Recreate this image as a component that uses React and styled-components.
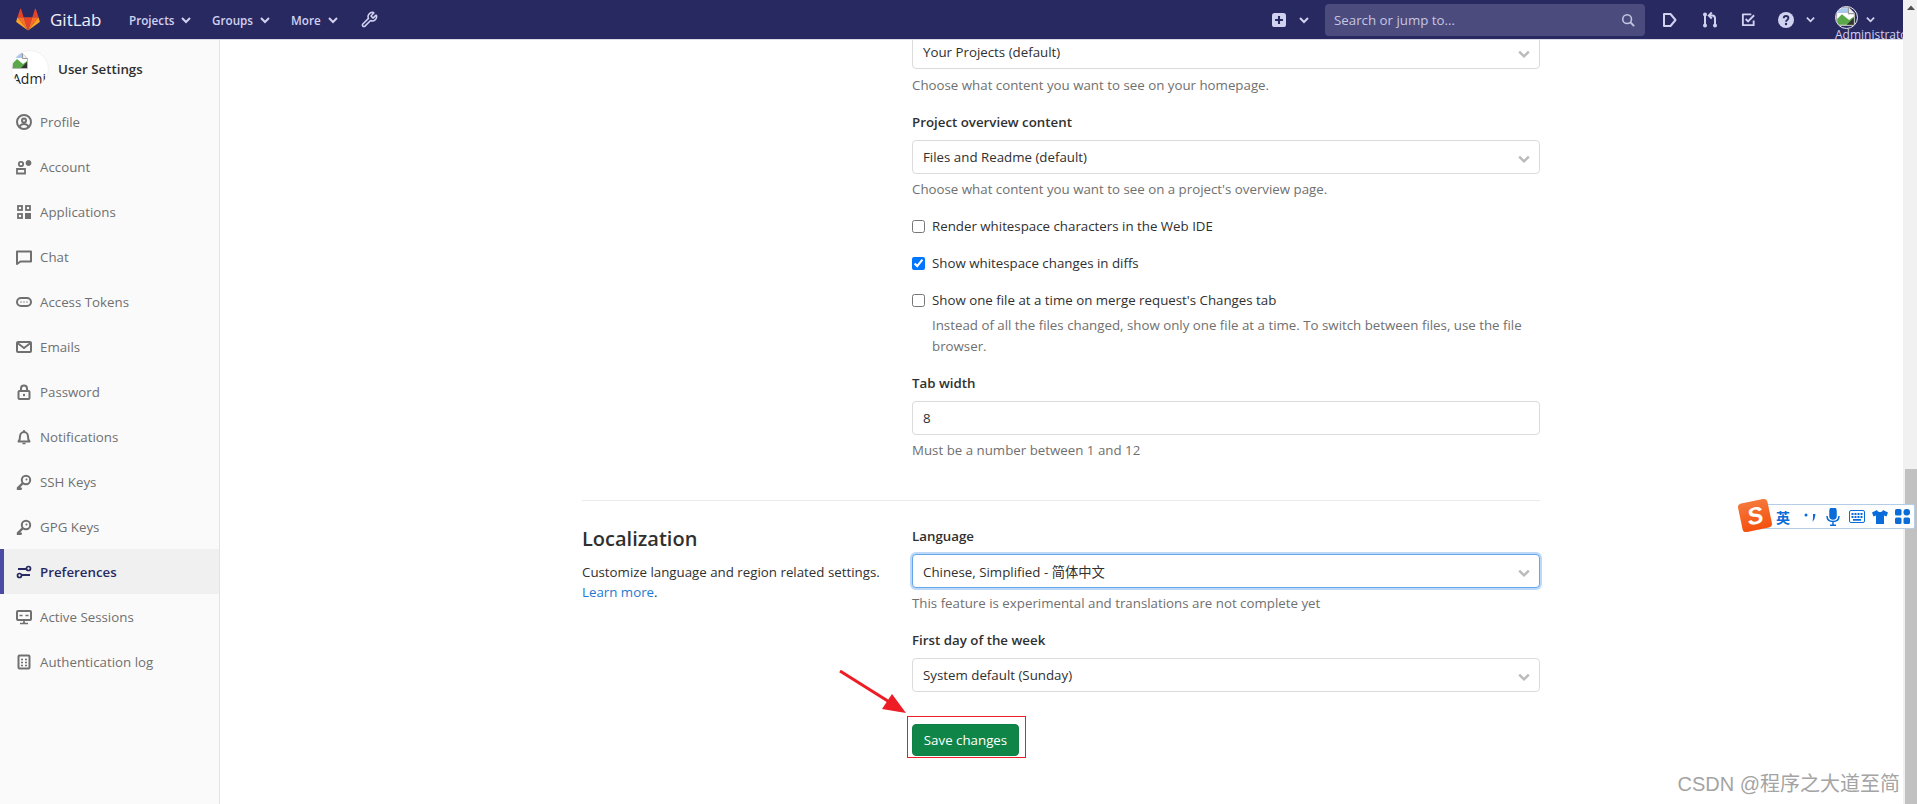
import React from 'react';
import styled, {createGlobalStyle} from 'styled-components';
import {Wrench} from 'lucide-react';

const FONT = `"Open Sans", "Noto Sans CJK SC", sans-serif`;

const GlobalStyle = createGlobalStyle`
  html, body { margin: 0; height: 100%; overflow: hidden; background: #fff; }
  #root { height: 100%; }
  * { box-sizing: border-box; }
  body { font-family: ${FONT}; font-size: 13.3px; color: #303030; }
`;

const Screen = styled.div`
  position: relative;
  display: flex;
  height: 804px;
  overflow: hidden;
`;
const Page = styled.div`
  flex: 1;
  min-width: 0;
  display: flex;
  flex-direction: column;
`;

/* ---- navbar ---- */
const Navbar = styled.header`
  position: relative;
  z-index: 2;
  flex: none;
  display: flex;
  align-items: center;
  height: 40px;
  background: #292961;
  border-bottom: 1px solid #dcdce8;
  color: #d1d1f0;
  overflow: hidden;
`;
const Brand = styled.div`
  display: flex;
  align-items: center;
  gap: 10px;
  margin-left: 16px;
  width: 113px;
  font-size: 17px;
  color: #f0f0f8;
`;
const NavLink = styled.div`
  display: flex;
  align-items: center;
  gap: 7px;
  width: ${p => p.$w}px;
  font-weight: 600;
  font-size: 11.7px;
`;
const NavRight = styled.div`
  margin-left: auto;
  display: flex;
  align-items: center;
`;
const IconSlot = styled.div`
  display: flex;
  align-items: center;
  width: ${p => p.$w}px;
`;
const Search = styled.div`
  display: flex;
  align-items: center;
  justify-content: space-between;
  width: 320px;
  height: 32px;
  margin-right: 17px;
  padding: 0 10px 0 9px;
  background: #4c4b7e;
  border-radius: 4px;
  font-size: 13.3px;
  color: #c6c6e0;
`;
const NavAvatar = styled.div`
  display: flex;
  flex-direction: column;
  width: 34px;
  margin-top: 7px;
  font-size: 12px;
  line-height: 11px;
  white-space: nowrap;
`;
const AvatarRing = styled.div`
  width: 23px;
  height: 23px;
  border: 1px solid #e8e8f2;
  border-radius: 50%;
  overflow: hidden;
`;

/* ---- sidebar ---- */
const Body = styled.div`
  flex: 1;
  min-height: 0;
  display: flex;
`;
const Sidebar = styled.aside`
  flex: none;
  width: 220px;
  background: #fafafa;
  border-right: 1px solid #e3e3e3;
`;
const SideHead = styled.div`
  display: flex;
  align-items: center;
  gap: 9px;
  padding: 10px 0 0 11px;
  margin-bottom: 11px;
  font-weight: 600;
  font-size: 13.3px;
  color: #303030;
`;
const SideAvatar = styled.div`
  width: 38px;
  height: 38px;
  padding: 2px 0 0 0;
  background: #fff;
  border: 1px solid #f2f2f2;
  border-radius: 50%;
  overflow: hidden;
  font-size: 14px;
  line-height: 20px;
  color: #222;
  white-space: nowrap;
  font-weight: 400;
`;
const SideItem = styled.div`
  display: flex;
  align-items: center;
  gap: 8px;
  height: 45px;
  padding-left: ${p => (p.$active ? 12 : 16)}px;
  background: ${p => (p.$active ? '#f0f0f0' : 'transparent')};
  border-left: ${p => (p.$active ? '4px solid #4b4ba3' : 'none')};
  color: ${p => (p.$active ? '#292961' : '#707070')};
  font-weight: ${p => (p.$active ? 600 : 400)};
`;

/* ---- settings form ---- */
const Main = styled.main`
  flex: 1;
  min-width: 0;
  margin-top: -5px;
`;
const Content = styled.div`
  width: 958px;
  margin-left: 362px;
`;
const Section = styled.section`
  display: grid;
  grid-template-columns: 330px 628px;
`;
const FormCol = styled.div`
  grid-column: 2;
`;
const Field = styled.div`
  margin-bottom: ${p => p.$mb ?? 18}px;
`;
const Label = styled.label`
  display: block;
  height: 20px;
  margin-bottom: ${p => p.$mb ?? 8}px;
  line-height: 20px;
  font-weight: 600;
  color: #303030;
`;
const SelectBox = styled.div`
  display: flex;
  align-items: center;
  justify-content: space-between;
  height: 34px;
  padding: 0 9px 0 10px;
  background: #fff;
  border: 1px solid ${p => (p.$focus ? '#63a6e9' : '#dbdbdb')};
  border-radius: 4px;
  box-shadow: ${p => (p.$focus ? '0 0 0 2px #bdd9f7' : 'none')};
  color: #303030;
`;
const SelectCaret = styled.span`
  display: flex;
  margin-top: 4px;
`;
const TextInput = styled.input`
  display: block;
  width: 100%;
  height: 34px;
  padding: 0 10px;
  border: 1px solid #dbdbdb;
  border-radius: 4px;
  font: inherit;
  color: #303030;
`;
const Help = styled.p`
  margin: ${p => p.$mt ?? 5}px 0 0;
  line-height: 20px;
  color: #707070;
`;
const CheckRow = styled.label`
  display: flex;
  align-items: center;
  gap: 7px;
  height: 20px;
  margin-bottom: 17px;
`;
const Check = styled.input`
  width: 13px;
  height: 13px;
  margin: 0;
`;
const CheckHelp = styled.p`
  margin: -12px 0 16px 20px;
  line-height: 21px;
  color: #707070;
`;
const Divider = styled.hr`
  height: 1px;
  margin: 40px 0 25px;
  border: 0;
  background: #eaeaea;
`;
const SectionIntro = styled.div`
  padding-top: 1px;
`;
const SectionTitle = styled.h4`
  margin: 0 0 11px;
  height: 24px;
  line-height: 24px;
  font-size: 20px;
  font-weight: 600;
  color: #303030;
`;
const SectionText = styled.p`
  margin: 0;
  line-height: 20px;
  color: #303030;
`;
const LearnMore = styled.span`
  color: #1f78d1;
`;
const SaveRow = styled.div`
  position: relative;
  width: 107px;
  margin-top: 32px;
`;
const SaveButton = styled.button`
  display: block;
  width: 100%;
  height: 32px;
  padding: 0;
  border: 1px solid #0e7f46;
  border-radius: 4px;
  background: #108548;
  color: #fff;
  font: inherit;
  font-weight: 500;
`;
const RedBox = styled.div`
  position: absolute;
  left: -5px;
  top: -8px;
  width: 119px;
  height: 42px;
  border: 1px solid #ee1c25;
`;
const RedArrow = styled.svg`
  position: absolute;
  left: -73px;
  top: -54px;
`;

/* ---- things on top of the page ---- */
const Scrollbar = styled.div`
  position: relative;
  flex: none;
  display: flex;
  flex-direction: column;
  width: 14px;
  background: #f1f1f1;
`;
const ScrollUp = styled.div`
  height: 469px;
  padding: 5px 0 0 4px;
  line-height: 0;
`;
const ScrollThumb = styled.div`
  flex: 1;
  margin-left: 2px;
  background: #c1c1c1;
`;
const ImeBar = styled.div`
  position: absolute;
  z-index: 3;
  left: 1750px;
  top: 504px;
  width: 165px;
  height: 25px;
  display: flex;
  align-items: center;
  padding-left: 25px;
  gap: 0;
  background: #fff;
  border: 1px solid #b6cde6;
  border-radius: 2px;
  color: #0a6cd8;
`;
const ImeLogo = styled.div`
  position: absolute;
  left: -11px;
  top: -4px;
  width: 30px;
  height: 29px;
  display: flex;
  align-items: center;
  justify-content: center;
  background: linear-gradient(#f4783a, #f5500f);
  border-radius: 4px;
  transform: rotate(-12deg);
  color: #fff;
  font: italic 700 24px "Liberation Sans", sans-serif;
`;
const ImeChar = styled.span`
  width: 27px;
  font: 700 14px "Noto Sans CJK SC", sans-serif;
`;
const ImeSlot = styled.div`
  display: flex;
  justify-content: center;
  width: ${p => p.$w ?? 24.5}px;
`;
const Watermark = styled.div`
  position: absolute;
  z-index: 3;
  right: 17px;
  top: 773px;
  font: 20px "Liberation Sans", "Noto Sans CJK SC", sans-serif;
  line-height: 22px;
  color: #a4a4a4;
`;

const Svg = ({size = 16, children, ...rest}) => (
    <svg width={size} height={size} viewBox="0 0 16 16" fill="none" stroke="currentColor"
         strokeWidth="2" style={{flex: 'none'}} {...rest}>{children}</svg>
);

const Chevron = ({color = 'currentColor', size = 10}) => (
    <svg width={size} height={size} viewBox="0 0 10 10" fill="none" stroke={color} strokeWidth="2" style={{flex: 'none'}}>
        <path d="M1 3l4 4 4-4"/>
    </svg>
);

const SIDE_ICONS = {
    profile: <>
        <circle cx="8" cy="8" r="7"/>
        <circle cx="8" cy="6.5" r="2"/>
        <path d="M3.5 13c.8-2 2.5-3 4.5-3s3.700 1 4.500 3"/>
    </>,
    account: <>
        <circle cx="5" cy="5" r="2.200" strokeWidth="1.800"/>
        <path d="M1 14.500V10h8v4.500z" strokeWidth="1.800"/>
        <circle cx="12.500" cy="4" r="2.500" fill="currentColor" strokeWidth="1"/>
    </>,
    apps: <>
        <rect x="2" y="2" width="4" height="4" strokeWidth="1.800"/>
        <rect x="10" y="2" width="4" height="4" strokeWidth="1.800"/>
        <rect x="2" y="10" width="4" height="4" strokeWidth="1.800"/>
        <rect x="9" y="9" width="6" height="6" fill="currentColor" stroke="none"/>
    </>,
    chat: <path d="M1 2.500h14v10H4.500L1 15z" strokeLinejoin="round"/>,
    token: <>
        <rect x="1" y="4" width="14" height="8" rx="4"/>
        <path d="M4.500 8h1M7.500 8h1M10.500 8h1" strokeWidth="1.600"/>
    </>,
    mail: <>
        <rect x="1" y="3" width="14" height="10" rx="1"/>
        <path d="M1.500 4l6.500 5 6.500-5" strokeWidth="1.800"/>
    </>,
    lock: <>
        <rect x="2.500" y="7" width="11" height="8" rx="1"/>
        <path d="M5 7V4.500a3 3 0 016 0V7"/>
        <circle cx="8" cy="11" r="1.200" fill="currentColor" stroke="none"/>
    </>,
    bell: <>
        <path d="M2.500 12.500h11c-1.500-1.500-1.500-3-1.500-5 0-2.500-1.800-4.500-4-4.500S4 5 4 7.500c0 2 0 3.500-1.500 5z" strokeLinejoin="round"/>
        <path d="M6.500 14.500h3" strokeWidth="1.600"/>
        <path d="M8 1v2" strokeWidth="1.600"/>
    </>,
    key: <>
        <circle cx="10" cy="6" r="4.200"/>
        <path d="M7 9l-5 5v1h2.500l.5-1.500" strokeWidth="2.400"/>
        <circle cx="10.500" cy="5.500" r="1" fill="currentColor" stroke="none"/>
    </>,
    prefs: <>
        <path d="M2 5h8M6 11h8"/>
        <circle cx="12.500" cy="4.500" r="2" strokeWidth="1.700"/>
        <circle cx="3.500" cy="11.500" r="2" strokeWidth="1.700"/>
    </>,
    monitor: <>
        <rect x="1" y="2" width="14" height="9" rx="1"/>
        <path d="M3.500 6.500h3M9.500 6.500h3M8 11v3M4 14.500h8" strokeWidth="1.700"/>
    </>,
    log: <>
        <rect x="2.500" y="1.500" width="11" height="13" rx="1"/>
        <path d="M5 5.500h2M9 5.500h2M5 8.500h2M9 8.500h2M5 11.500h2M9 11.500h2" strokeWidth="1.500"/>
    </>,
};

const SIDE_ITEMS = [
    ['profile', 'Profile'],
    ['account', 'Account'],
    ['apps', 'Applications'],
    ['chat', 'Chat'],
    ['token', 'Access Tokens'],
    ['mail', 'Emails'],
    ['lock', 'Password'],
    ['bell', 'Notifications'],
    ['key', 'SSH Keys'],
    ['key', 'GPG Keys'],
    ['prefs', 'Preferences'],
    ['monitor', 'Active Sessions'],
    ['log', 'Authentication log'],
];

const Tanuki = () => (
    <svg width="24" height="23" viewBox="0 0 36 35" style={{flex: 'none'}}>
        <path d="M18 34.400L11.400 14h13.200z" fill="#e24329"/>
        <path d="M18 34.400L11.400 14H2z" fill="#fc6d26"/>
        <path d="M2 14L.1 20.200c-.2.500 0 1.100.5 1.500L18 34.400z" fill="#fca326"/>
        <path d="M2 14h9.400L7.400 1.700c-.2-.600-1.200-.600-1.400 0z" fill="#e24329"/>
        <path d="M18 34.400L24.600 14H34z" fill="#fc6d26"/>
        <path d="M34 14l1.900 6.200c.2.500 0 1.100-.5 1.500L18 34.400z" fill="#fca326"/>
        <path d="M34 14h-9.400l4-12.300c.2-.600 1.200-.600 1.400 0z" fill="#e24329"/>
    </svg>
);

const BrokenImage = ({size = 16}) => (
    <svg width={size} height={size} viewBox="0 0 16 16" style={{display: 'block', flex: 'none'}}>
        <path d="M.5.5h10l5 5v10H.5z" fill="#fff" stroke="#b8b8b8"/>
        <path d="M1 1h10v4H1z" fill="#a9c8ee"/>
        <path d="M1 15V10l4-4 6 5 4-3v7z" fill="#5aa84a"/>
        <path d="M9 15l6-6v6z" fill="#333"/>
        <path d="M10.500.5v5h5" fill="#eee" stroke="#999"/>
    </svg>
);

const Select = ({value, focus}) => (
    <SelectBox $focus={focus}>
        <span>{value}</span>
        <SelectCaret><Chevron color="#bababa" size={12}/></SelectCaret>
    </SelectBox>
);

export default function App() {
    return (
        <Screen>
            <GlobalStyle/>
            <Page>
                <Navbar>
                    <Brand><Tanuki/>GitLab</Brand>
                    <NavLink $w={83}>Projects <Chevron/></NavLink>
                    <NavLink $w={79}>Groups <Chevron/></NavLink>
                    <NavLink $w={70}>More <Chevron/></NavLink>
                    <Wrench size={17} strokeWidth={2.2}/>
                    <NavRight>
                        <IconSlot $w={27}>
                            <Svg size={14}>
                                <rect x="0" y="0" width="16" height="16" rx="3" fill="currentColor" stroke="none"/>
                                <path d="M8 3.500v9M3.500 8h9" stroke="#292961" strokeWidth="2.400"/>
                            </Svg>
                        </IconSlot>
                        <IconSlot $w={26}><Chevron/></IconSlot>
                        <Search>
                            Search or jump to...
                            <Svg size={14} strokeWidth="1.800">
                                <circle cx="7" cy="7" r="5"/>
                                <path d="M10.500 10.500L15 15" strokeWidth="2.200"/>
                            </Svg>
                        </Search>
                        <IconSlot $w={40}>
                            <Svg size={16}>
                                <path d="M2 2h6.500l5 6-5 6H2z" strokeLinejoin="round"/>
                            </Svg>
                        </IconSlot>
                        <IconSlot $w={39}>
                            <Svg size={16}>
                                <path d="M3 3v10" strokeWidth="2"/>
                                <circle cx="3" cy="2.500" r="2" fill="currentColor" stroke="none"/>
                                <circle cx="3" cy="13.500" r="2" fill="currentColor" stroke="none"/>
                                <circle cx="13" cy="13.500" r="2" fill="currentColor" stroke="none"/>
                                <path d="M13 13V6.500c0-1.800-1-3-2.800-3H7.500" strokeWidth="2"/>
                                <path d="M9.800 .5l-3 3 3 3" strokeWidth="2"/>
                            </Svg>
                        </IconSlot>
                        <IconSlot $w={37}>
                            <Svg size={15}>
                                <path d="M13.500 9v5H2V2.500h9" strokeLinejoin="round"/>
                                <path d="M5 7.500l2.500 2.500L14 3.500" strokeWidth="2"/>
                            </Svg>
                        </IconSlot>
                        <IconSlot $w={28}>
                            <Svg size={16}>
                                <circle cx="8" cy="8" r="8" fill="currentColor" stroke="none"/>
                                <path d="M5.700 6.200C5.800 4.800 6.800 4 8 4s2.400.8 2.400 2.100c0 1.800-2.400 1.800-2.400 3.600" stroke="#292961" strokeWidth="1.900"/>
                                <circle cx="8" cy="12" r="1.200" fill="#292961" stroke="none"/>
                            </Svg>
                        </IconSlot>
                        <IconSlot $w={29}><Chevron size={9}/></IconSlot>
                        <IconSlot $w={31}>
                            <NavAvatar>
                                <AvatarRing><BrokenImage size={19}/></AvatarRing>
                                Administrator
                            </NavAvatar>
                        </IconSlot>
                        <IconSlot $w={37}><Chevron size={9}/></IconSlot>
                    </NavRight>
                </Navbar>
                <Body>
                    <Sidebar>
                        <SideHead>
                            <SideAvatar><BrokenImage/>Admin</SideAvatar>
                            User Settings
                        </SideHead>
                        {SIDE_ITEMS.map(([icon, label]) => (
                            <SideItem key={label} $active={label === 'Preferences'}>
                                <Svg>{SIDE_ICONS[icon]}</Svg>
                                {label}
                            </SideItem>
                        ))}
                    </Sidebar>
                    <Main>
                        <Content>
                            <Section>
                                <FormCol>
                                    <Field $mb={17}>
                                        <Select value="Your Projects (default)"/>
                                        <Help $mt={6}>Choose what content you want to see on your homepage.</Help>
                                    </Field>
                                    <Field $mb={17}>
                                        <Label>Project overview content</Label>
                                        <Select value="Files and Readme (default)"/>
                                        <Help>Choose what content you want to see on a project's overview page.</Help>
                                    </Field>
                                    <CheckRow><Check type="checkbox" readOnly/>Render whitespace characters in the Web IDE</CheckRow>
                                    <CheckRow><Check type="checkbox" checked readOnly/>Show whitespace changes in diffs</CheckRow>
                                    <CheckRow><Check type="checkbox" readOnly/>Show one file at a time on merge request's Changes tab</CheckRow>
                                    <CheckHelp>Instead of all the files changed, show only one file at a time. To switch between files, use the file browser.</CheckHelp>
                                    <Label>Tab width</Label>
                                    <TextInput type="text" defaultValue="8"/>
                                    <Help>Must be a number between 1 and 12</Help>
                                </FormCol>
                            </Section>
                            <Divider/>
                            <Section>
                                <SectionIntro>
                                    <SectionTitle>Localization</SectionTitle>
                                    <SectionText>Customize language and region related settings.<br/>
                                        <LearnMore>Learn more</LearnMore>.
                                    </SectionText>
                                </SectionIntro>
                                <div>
                                    <Field $mb={17}>
                                        <Label>Language</Label>
                                        <Select value="Chinese, Simplified - 简体中文" focus/>
                                        <Help>This feature is experimental and translations are not complete yet</Help>
                                    </Field>
                                    <Field $mb={0}>
                                        <Label>First day of the week</Label>
                                        <Select value="System default (Sunday)"/>
                                    </Field>
                                    <SaveRow>
                                        <SaveButton>Save changes</SaveButton>
                                        <RedBox/>
                                        <RedArrow width="68" height="44" viewBox="0 0 68 44">
                                            <path d="M1 1L52 33" stroke="#ee1c25" strokeWidth="3"/>
                                            <path d="M67 43L43 39l10-15z" fill="#ee1c25"/>
                                        </RedArrow>
                                    </SaveRow>
                                </div>
                            </Section>
                        </Content>
                    </Main>
                </Body>
            </Page>
            <Scrollbar>
                <ScrollUp>
                    <svg width="8" height="6" viewBox="0 0 8 6" style={{display: 'block'}}><path d="M0 5l4-4.500L8 5z" fill="#505050"/></svg>
                </ScrollUp>
                <ScrollThumb/>
            </Scrollbar>
            <ImeBar>
                <ImeLogo>S</ImeLogo>
                <ImeChar>英</ImeChar>
                <ImeSlot $w={20}>
                    <svg width="12" height="12" viewBox="0 0 12 12" fill="currentColor">
                        <circle cx="2" cy="4" r="1.500"/>
                        <path d="M9 3h2.500l-1 5-2 3 .5-4z"/>
                    </svg>
                </ImeSlot>
                <ImeSlot $w={28}>
                    <svg width="14" height="18" viewBox="0 0 14 18" fill="none" stroke="currentColor" strokeWidth="1.500">
                        <rect x="4" y="0" width="6" height="11" rx="3" fill="currentColor"/>
                        <path d="M1 8c0 3.500 2.500 5.500 6 5.500s6-2 6-5.500M7 13.500V17M4 17.300h6"/>
                    </svg>
                </ImeSlot>
                <ImeSlot>
                    <svg width="16" height="13" viewBox="0 0 16 13">
                        <rect x=".5" y=".5" width="15" height="12" rx="1.500" fill="none" stroke="currentColor"/>
                        <path d="M2.500 3h2v2h-2zM5.500 3h2v2h-2zM8.500 3h2v2h-2zM11.500 3h2v2h-2zM2.500 6h2v2h-2zM5.500 6h2v2h-2zM8.500 6h2v2h-2zM11.500 6h2v2h-2zM4 9h8v1.800H4z" fill="currentColor"/>
                    </svg>
                </ImeSlot>
                <ImeSlot>
                    <svg width="16" height="14" viewBox="0 0 16 14" fill="currentColor">
                        <path d="M5 0L0 2.500l1.500 4L4 5.500V14h8V5.500l2.500 1 1.500-4L11 0c-.5 1.500-1.500 2-3 2S5.500 1.500 5 0z"/>
                    </svg>
                </ImeSlot>
                <ImeSlot>
                    <svg width="15" height="15" viewBox="0 0 15 15" fill="currentColor">
                        <rect x="0" y="0" width="6.500" height="6.500" rx="1.500"/>
                        <rect x="8.500" y="0" width="6.500" height="6.500" rx="3"/>
                        <rect x="0" y="8.500" width="6.500" height="6.500" rx="1.500"/>
                        <rect x="8.500" y="8.500" width="6.500" height="6.500" rx="1.500"/>
                    </svg>
                </ImeSlot>
            </ImeBar>
            <Watermark>CSDN @程序之大道至简</Watermark>
        </Screen>
    );
}
